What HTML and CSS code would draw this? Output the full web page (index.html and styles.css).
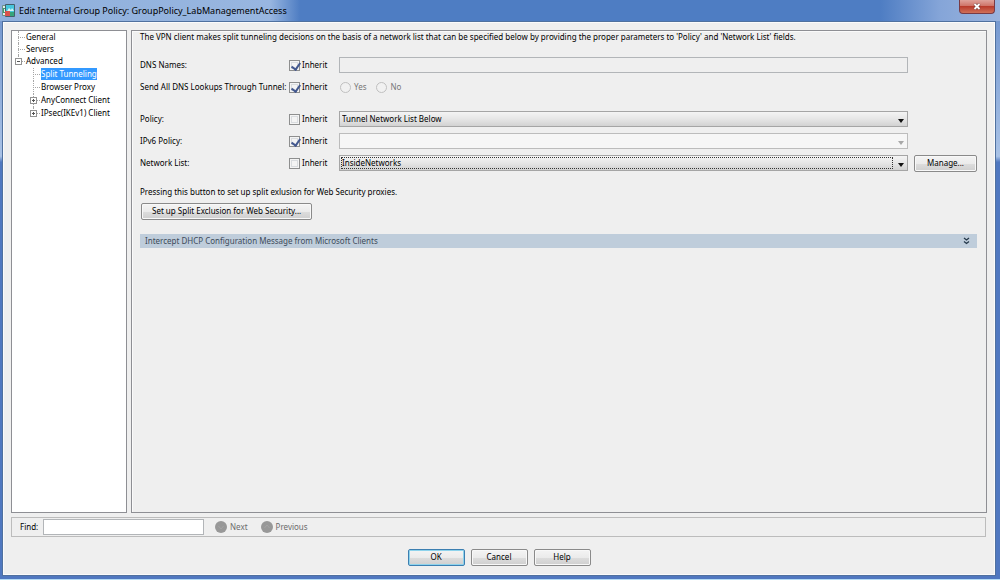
FILE: index.html
```
<!doctype html>
<html lang="en">
  <head>
    <meta charset="utf-8">
    <title>Edit Internal Group Policy</title>
    <link rel="stylesheet" href="styles.css">
  </head>
  <body>
    <div class="window">
      <header class="titlebar">
        <svg class="app-icon" width="13" height="13" viewBox="0 0 13 13">
          <rect x="0" y="1" width="6" height="11" rx="1" fill="#6f9089"/>
          <rect x="1" y="2" width="3" height="9" fill="#e3f2e8"/>
          <path d="M1.500 4v5M1 4.500h2M1 8.500h2" stroke="#3b9c74"/>
          <rect x="3" y="0" width="10" height="13" rx="1" fill="#44606c"/>
          <rect x="4" y="1" width="8" height="7" fill="#46c5dc"/>
          <path d="M5 7l2-3 2 2 1-2 2 3z" fill="#d9f6f7"/>
          <rect x="4" y="8" width="8" height="4" fill="#35a57a"/>
          <rect x="3" y="7" width="5" height="5" fill="#d8534d"/>
        </svg>
        <h1>Edit Internal Group Policy: GroupPolicy_LabManagementAccess</h1>
        <button class="close" type="button" aria-label="Close">
          <svg width="8" height="7" viewBox="0 0 8 7">
            <path d="M1.500 1l5 5M6.500 1l-5 5" stroke="#5b2a2a" stroke-width="3"/>
            <path d="M1.500 1l5 5M6.500 1l-5 5" stroke="#fff" stroke-width="2"/>
          </svg>
        </button>
      </header>

      <form class="client">
        <div class="split">
          <nav class="tree">
            <ul>
              <li><a href="#general">General</a></li>
              <li><a href="#servers">Servers</a></li>
              <li class="last">
                <svg class="toggle" width="7" height="7" viewBox="0 0 7 7"><rect x=".5" y=".5" width="6" height="6" fill="#fff" stroke="#929292"/><path d="M2 3.500h3" stroke="#555"/></svg>
                <a href="#advanced">Advanced</a>
                <ul>
                  <li><a class="selected" href="#split">Split Tunneling</a></li>
                  <li><a href="#proxy">Browser Proxy</a></li>
                  <li>
                    <svg class="toggle" width="7" height="7" viewBox="0 0 7 7"><rect x=".5" y=".5" width="6" height="6" fill="#fff" stroke="#929292"/><path d="M2 3.500h3M3.500 2v3" stroke="#555"/></svg>
                    <a href="#anyconnect">AnyConnect Client</a>
                  </li>
                  <li class="last">
                    <svg class="toggle" width="7" height="7" viewBox="0 0 7 7"><rect x=".5" y=".5" width="6" height="6" fill="#fff" stroke="#929292"/><path d="M2 3.500h3M3.500 2v3" stroke="#555"/></svg>
                    <a href="#ipsec">IPsec(IKEv1) Client</a>
                  </li>
                </ul>
              </li>
            </ul>
          </nav>

          <main class="panel">
            <p class="intro">The VPN client makes split tunneling decisions on the basis of a network list that can be specified below by providing the proper parameters to 'Policy' and 'Network List' fields.</p>

            <div class="row">
              <label for="dns_names">DNS Names:</label>
              <label class="check"><input type="checkbox" checked> Inherit</label>
              <input class="text" id="dns_names" type="text" disabled>
            </div>
            <div class="row">
              <span>Send All DNS Lookups Through Tunnel:</span>
              <label class="check"><input type="checkbox" checked> Inherit</label>
              <div class="radios">
                <label><input type="radio" name="lookups" disabled> Yes</label>
                <label><input type="radio" name="lookups" disabled> No</label>
              </div>
            </div>
            <div class="row spaced">
              <label for="policy">Policy:</label>
              <label class="check"><input type="checkbox"> Inherit</label>
              <div class="combo">
                <select id="policy"><option>Tunnel Network List Below</option></select>
              </div>
            </div>
            <div class="row">
              <label for="ipv6_policy">IPv6 Policy:</label>
              <label class="check"><input type="checkbox" checked> Inherit</label>
              <div class="combo disabled">
                <select id="ipv6_policy" disabled><option></option></select>
              </div>
            </div>
            <div class="row">
              <label for="network_list">Network List:</label>
              <label class="check"><input type="checkbox"> Inherit</label>
              <div class="combo focused">
                <select id="network_list"><option>InsideNetworks</option></select>
              </div>
              <button class="btn" type="button">Manage...</button>
            </div>

            <p class="hint">Pressing this button to set up split exlusion for Web Security proxies.</p>
            <button class="btn setup" type="button">Set up Split Exclusion for Web Security...</button>

            <button class="section" type="button">
              Intercept DHCP Configuration Message from Microsoft Clients
              <svg width="7" height="8" viewBox="0 0 7 8"><path d="M1 1l2.500 2L6 1M1 4.500l2.500 2L6 4.500" fill="none" stroke="#25394b" stroke-width="1.300"/></svg>
            </button>
          </main>
        </div>

        <div class="find">
          <label for="find">Find:</label>
          <input class="text" id="find" type="text">
          <button class="nav-btn" type="button" disabled>
            <svg width="12" height="12" viewBox="0 0 12 12"><circle cx="6" cy="6" r="6" fill="#989898"/><path d="M3.500 5l2.500 3 2.500-3" fill="none" stroke="#a4a4a4"/></svg>
            Next
          </button>
          <button class="nav-btn" type="button" disabled>
            <svg width="12" height="12" viewBox="0 0 12 12"><circle cx="6" cy="6" r="6" fill="#989898"/><path d="M3.500 7l2.500-3 2.500 3" fill="none" stroke="#a4a4a4"/></svg>
            Previous
          </button>
        </div>

        <footer class="actions">
          <button class="btn default" type="button">OK</button>
          <button class="btn" type="button">Cancel</button>
          <button class="btn" type="button">Help</button>
        </footer>
      </form>
    </div>
  </body>
</html>
```
FILE: styles.css
```
* { box-sizing: border-box; }

body {
  color: #000;
  font: 8px/12px 'Noto Sans', Tahoma, sans-serif;
  margin: 0;
}

h1, p, ul {
  font-size: inherit;
  font-weight: normal;
  margin: 0;
  padding: 0;
}

input, select, button {
  border-radius: 0;
  color: inherit;
  font: inherit;
  margin: 0;
}

.window {
  background: linear-gradient(#6f93cd, #a9c2e6 27%, #5078c0 28%, #5078c0);
  border-bottom: 1px solid #b5dcf5;
  display: flex;
  flex-direction: column;
  min-height: 100vh;
  padding: 0 4px 3px 2px;
}

/* title bar */
.titlebar {
  align-items: center;
  background: linear-gradient(90deg, #8fb0dc, #98b6e0 27%, #4e7dc3 30%, #4e7dc3 88%, #85a5d8 94%, #9ab4de);
  display: flex;
  height: 21px;
  margin: 0 -4px 0 -2px;
  padding: 0 5px 0 2px;
}

.titlebar h1 {
  font: 9px/20px 'Noto Sans', 'Segoe UI', sans-serif;
  margin-left: 4px;
}

.close {
  align-items: center;
  align-self: flex-start;
  background: linear-gradient(#dfa39b, #cf7468 45%, #b93c2c 50%, #d0715a);
  border: 1px solid #793b45;
  border-radius: 0 0 4px 4px;
  border-top: 0;
  display: flex;
  height: 14px;
  justify-content: center;
  margin-left: auto;
  padding: 0;
  width: 36px;
}

.client {
  background: #efefef;
  border: 1px solid #50719f;
  box-shadow: inset 0 0 0 1px #fbfbfb;
  display: flex;
  flex: 1;
  flex-direction: column;
  padding: 8px 8px 9px;
}

.split {
  display: flex;
  flex: 1;
  gap: 4px;
}

/* navigation tree */
.tree {
  background: #fff;
  border: 1px solid #8e8f94;
  flex: none;
  padding: 0 0 0 6px;
  width: 116px;
}

.tree ul { list-style: none; }

.tree ul ul {
  margin: 1px 0 0 -8px;
  padding-left: 15px;
}

.tree li {
  padding-left: 8px;
  position: relative;
}

.tree ul ul li { padding-bottom: 1px; }

.tree li::before {
  border-left: 1px dotted #a6a6a6;
  content: '';
  height: 100%;
  left: 0;
  position: absolute;
  top: 0;
}
.tree li.last::before { height: 6px; }

.tree li::after {
  border-top: 1px dotted #a6a6a6;
  content: '';
  left: 0;
  position: absolute;
  top: 6px;
  width: 7px;
}

.tree .toggle {
  left: -3px;
  position: absolute;
  top: 3px;
  z-index: 1;
}

.tree a {
  color: inherit;
  display: block;
  line-height: 12px;
  text-decoration: none;
  width: max-content;
}

.tree .selected {
  background: #3399ff;
  color: #fff;
}

/* settings panel */
.panel {
  border: 1px solid #8e8f94;
  box-shadow: inset 1px 1px 0 #fafafa;
  flex: 1;
  padding: 0 9px 0 8px;
}

.intro {
  line-height: 11px;
  margin-bottom: 12px;
}

.row {
  align-items: center;
  column-gap: 6px;
  display: grid;
  grid-template-columns: 143px 44px 1fr 63px;
  height: 22px;
  white-space: nowrap;
}

.row.spaced { margin-top: 10px; }

.check,
.radios,
.radios label {
  align-items: center;
  display: flex;
}

.check { gap: 2px; }

.check input {
  appearance: none;
  background: #f4f4f4;
  border: 1px solid #8e8f8f;
  box-shadow: inset 0 0 0 1px #f4f4f4, inset 0 0 0 2px #d9dcdf;
  flex: none;
  height: 11px;
  position: relative;
  width: 11px;
}

.check input:checked::after {
  border: solid #44598f;
  border-width: 0 2px 2px 0;
  content: '';
  height: 7px;
  left: 3px;
  position: absolute;
  top: 0;
  transform: rotate(35deg);
  width: 4px;
}

.radios {
  color: #777;
  gap: 9px;
}

.radios label { gap: 3px; }

.radios input {
  appearance: none;
  background: #f1f1f1;
  border: 1px solid #c0c0c0;
  border-radius: 50%;
  height: 11px;
  margin-left: 1px;
  width: 11px;
}

.text {
  background: #fff;
  border: 1px solid #b2b5b8;
  height: 16px;
  padding: 0 2px;
}
.text:disabled { background: #efefef; }

.combo {
  height: 16px;
  position: relative;
}

.combo select {
  appearance: none;
  background: linear-gradient(#f4f4f4, #e6e6e6 50%, #d2d2d2);
  border: 1px solid #a5a5a5;
  display: block;
  height: 16px;
  padding: 0 20px 0 2px;
  width: 100%;
}

.combo::after {
  border: 3px solid transparent;
  border-bottom: 0;
  border-top: 4px solid #111;
  content: '';
  pointer-events: none;
  position: absolute;
  right: 4px;
  top: 8px;
}

.combo.disabled select {
  background: #f6f6f6;
  border-color: #bcbcbc;
  opacity: 1;
}
.combo.disabled::after { border-top-color: #a8a8a8; }

/* focus rectangle inside the combo box */
.combo.focused::before {
  border: 1px dotted #333;
  content: '';
  inset: 2px 15px 2px 2px;
  pointer-events: none;
  position: absolute;
}

.btn {
  background: linear-gradient(#f4f4f4, #ebebeb 50%, #dddddd 51%, #cfcfcf);
  border: 1px solid #8a8a8a;
  border-radius: 2px;
  box-shadow: inset 0 0 0 1px #f8f8f8;
  height: 17px;
  line-height: 12px;
  padding: 0 10px 1px;
}

.btn.default {
  border-color: #3c7fb1;
  box-shadow: inset 0 0 0 1px #8ed3ec;
}

.row .btn { padding: 0 0 1px; }

.hint { margin-top: 12px; }

.setup {
  display: block;
  margin: 5px 0 0 1px;
}

.section {
  align-items: center;
  background: #bfcddb;
  border: 0;
  color: #3d4b59;
  display: flex;
  height: 14px;
  justify-content: space-between;
  margin-top: 14px;
  padding: 0 7px 0 5px;
  width: 100%;
}

/* find bar */
.find {
  align-items: center;
  border: 1px solid #bcbcbc;
  display: flex;
  height: 20px;
  margin: 4px 1px 0 0;
  padding-left: 8px;
}

.find label { width: 19px; }

.find .text {
  margin: 0 11px 0 4px;
  width: 161px;
}

.nav-btn {
  align-items: center;
  background: none;
  border: 0;
  color: #6c6c6c;
  display: flex;
  gap: 3px;
  margin-right: 13px;
  padding: 0;
}

.actions {
  display: flex;
  gap: 6px;
  justify-content: center;
  margin-top: 12px;
}

.actions .btn { width: 57px; }
```
